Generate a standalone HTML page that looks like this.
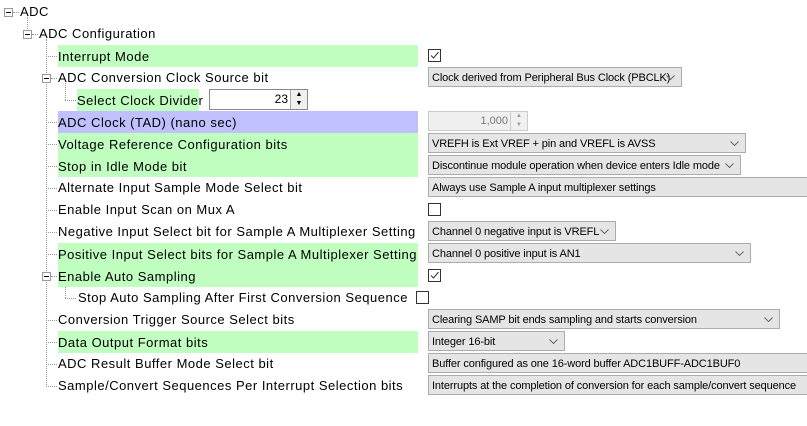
<!DOCTYPE html>
<html><head><style>
body{margin:0;width:807px;height:426px;background:#fff;position:relative;overflow:hidden;font-family:"Liberation Sans",sans-serif;}
.l{position:absolute;height:22px;line-height:23px;font-size:13px;letter-spacing:0.5px;color:#000;white-space:nowrap;}
.g{background:#c0ffc0;}
.p{background:#c0c0ff;}
.c{position:absolute;height:20px;line-height:20px;background:#e5e5e5;border:1px solid #acacac;font-size:11px;padding-left:3px;box-sizing:border-box;white-space:nowrap;letter-spacing:-0.12px;color:#000;overflow:hidden;}
.c svg{position:absolute;right:6px;top:7px;}
.cb{position:absolute;width:13px;height:13px;border:1px solid #333;box-sizing:border-box;background:#fff;}
.vl{position:absolute;border-left:1px dotted #999;width:0;}
.hl{position:absolute;border-top:1px dotted #999;height:0;}
.bx{position:absolute;width:9px;height:9px;border:1px solid #999;box-sizing:border-box;background:#fff;}
.bx:after{content:"";position:absolute;left:1px;top:3px;width:5px;height:1px;background:#000;}
</style></head><body>
<div class="vl" style="left:27px;top:17px;height:12px"></div>
<div class="vl" style="left:46px;top:39px;height:348px"></div>
<div class="vl" style="left:65px;top:83px;height:17px"></div>
<div class="vl" style="left:65px;top:281px;height:17px"></div>
<div class="hl" style="left:13px;top:12px;width:6px"></div>
<div class="hl" style="left:32px;top:34px;width:6px"></div>
<div class="hl" style="left:46px;top:56px;width:11px"></div>
<div class="hl" style="left:51px;top:78px;width:6px"></div>
<div class="hl" style="left:65px;top:100px;width:11px"></div>
<div class="hl" style="left:46px;top:122px;width:11px"></div>
<div class="hl" style="left:46px;top:144px;width:11px"></div>
<div class="hl" style="left:46px;top:166px;width:11px"></div>
<div class="hl" style="left:46px;top:188px;width:11px"></div>
<div class="hl" style="left:46px;top:210px;width:11px"></div>
<div class="hl" style="left:46px;top:232px;width:11px"></div>
<div class="hl" style="left:46px;top:254px;width:11px"></div>
<div class="hl" style="left:51px;top:276px;width:6px"></div>
<div class="hl" style="left:65px;top:298px;width:11px"></div>
<div class="hl" style="left:46px;top:320px;width:11px"></div>
<div class="hl" style="left:46px;top:342px;width:11px"></div>
<div class="hl" style="left:46px;top:364px;width:11px"></div>
<div class="hl" style="left:46px;top:386px;width:11px"></div>
<div class="bx" style="left:4px;top:8px"></div>
<div class="bx" style="left:23px;top:30px"></div>
<div class="bx" style="left:42px;top:74px"></div>
<div class="bx" style="left:42px;top:272px"></div>

<div class="l" style="left:20px;top:0">ADC</div>
<div class="l" style="left:39px;top:22px">ADC Configuration</div>
<div class="l g" style="left:58px;top:45px;width:360px">Interrupt Mode</div>
<div class="l" style="left:58px;top:66px">ADC Conversion Clock Source bit</div>
<div class="l g" style="left:77px;top:89px;width:122px">Select Clock Divider</div>
<div class="l p" style="left:58px;top:111px;width:360px">ADC Clock (TAD) (nano sec)</div>
<div class="l g" style="left:58px;top:133px;width:360px">Voltage Reference Configuration bits</div>
<div class="l g" style="left:58px;top:155px;width:360px">Stop in Idle Mode bit</div>
<div class="l" style="left:58px;top:176px">Alternate Input Sample Mode Select bit</div>
<div class="l" style="left:58px;top:198px">Enable Input Scan on Mux A</div>
<div class="l" style="left:58px;top:220px">Negative Input Select bit for Sample A Multiplexer Setting</div>
<div class="l g" style="left:58px;top:243px;width:360px">Positive Input Select bits for Sample A Multiplexer Setting</div>
<div class="l g" style="left:58px;top:265px;width:360px">Enable Auto Sampling</div>
<div class="l" style="left:78px;top:286px">Stop Auto Sampling After First Conversion Sequence</div>
<div class="l" style="left:58px;top:308px">Conversion Trigger Source Select bits</div>
<div class="l g" style="left:58px;top:331px;width:360px">Data Output Format bits</div>
<div class="l" style="left:58px;top:352px">ADC Result Buffer Mode Select bit</div>
<div class="l" style="left:58px;top:374px">Sample/Convert Sequences Per Interrupt Selection bits</div>

<div class="cb" style="left:428px;top:49px"><svg width="11" height="11" style="position:absolute;left:0;top:0"><path d="M2 5.5 L4.5 8 L9.5 2" stroke="#333" fill="none"/></svg></div>
<div class="c" style="left:428px;top:67px;width:254px">Clock derived from Peripheral Bus Clock (PBCLK)<svg width="9" height="5"><path d="M0.5 0.5 L4.5 4.5 L8.5 0.5" stroke="#666" fill="none"/></svg></div>
<div style="position:absolute;left:209px;top:89px;width:99px;height:21px;border:1px solid #888;box-sizing:border-box;background:#fff;font-size:12px;text-align:right;line-height:19px;padding-right:19px">23
<div style="position:absolute;right:0;top:0;width:16px;height:19px;border-left:1px solid #aaa;background:#f0f0f0;font-size:7px;line-height:9px;text-align:center">▲<br>▼</div></div>
<div style="position:absolute;left:428px;top:111px;width:100px;height:20px;border:1px solid #ccc;box-sizing:border-box;background:#f0f0f0;color:#777;font-size:11px;text-align:right;line-height:18px;padding-right:19px">1,000
<div style="position:absolute;right:0;top:0;width:16px;height:18px;border-left:1px solid #ccc;font-size:6px;line-height:9px;text-align:center;color:#999">▲<br>▼</div></div>
<div class="c" style="left:428px;top:133px;width:318px">VREFH is Ext VREF + pin and VREFL is AVSS<svg width="9" height="5"><path d="M0.5 0.5 L4.5 4.5 L8.5 0.5" stroke="#666" fill="none"/></svg></div>
<div class="c" style="left:428px;top:155px;width:313px">Discontinue module operation when device enters Idle mode<svg width="9" height="5"><path d="M0.5 0.5 L4.5 4.5 L8.5 0.5" stroke="#666" fill="none"/></svg></div>
<div class="c" style="left:428px;top:177px;width:390px">Always use Sample A input multiplexer settings</div>
<div class="cb" style="left:428px;top:203px"></div>
<div class="c" style="left:428px;top:221px;width:188px">Channel 0 negative input is VREFL<svg width="9" height="5"><path d="M0.5 0.5 L4.5 4.5 L8.5 0.5" stroke="#666" fill="none"/></svg></div>
<div class="c" style="left:428px;top:243px;width:323px">Channel 0 positive input is AN1<svg width="9" height="5"><path d="M0.5 0.5 L4.5 4.5 L8.5 0.5" stroke="#666" fill="none"/></svg></div>
<div class="cb" style="left:428px;top:269px"><svg width="11" height="11" style="position:absolute;left:0;top:0"><path d="M2 5.5 L4.5 8 L9.5 2" stroke="#333" fill="none"/></svg></div>
<div class="cb" style="left:416px;top:291px"></div>
<div class="c" style="left:428px;top:309px;width:352px">Clearing SAMP bit ends sampling and starts conversion<svg width="9" height="5"><path d="M0.5 0.5 L4.5 4.5 L8.5 0.5" stroke="#666" fill="none"/></svg></div>
<div class="c" style="left:428px;top:331px;width:137px">Integer 16-bit<svg width="9" height="5"><path d="M0.5 0.5 L4.5 4.5 L8.5 0.5" stroke="#666" fill="none"/></svg></div>
<div class="c" style="left:428px;top:353px;width:390px">Buffer configured as one 16-word buffer ADC1BUFF-ADC1BUF0</div>
<div class="c" style="left:428px;top:375px;width:390px">Interrupts at the completion of conversion for each sample/convert sequence</div>
</body></html>
